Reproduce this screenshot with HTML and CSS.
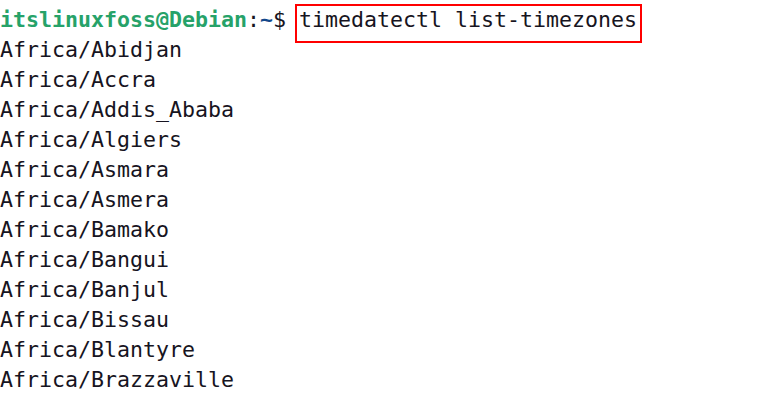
FILE: index.html
```html
<!DOCTYPE html>
<html>
<head>
<meta charset="utf-8">
<link rel="stylesheet" href="styles.css">
</head>
<body>
<div class="term">
  <div class="line"><span class="user">itslinuxfoss@Debian</span>:<span class="path">~</span>$ <span class="cmd">timedatectl list-timezones</span></div>
  <div class="line">Africa/Abidjan</div>
  <div class="line">Africa/Accra</div>
  <div class="line">Africa/Addis_Ababa</div>
  <div class="line">Africa/Algiers</div>
  <div class="line">Africa/Asmara</div>
  <div class="line">Africa/Asmera</div>
  <div class="line">Africa/Bamako</div>
  <div class="line">Africa/Bangui</div>
  <div class="line">Africa/Banjul</div>
  <div class="line">Africa/Bissau</div>
  <div class="line">Africa/Blantyre</div>
  <div class="line">Africa/Brazzaville</div>
  <div class="line">Africa/Bujumbura</div>
</div>
</body>
</html>
```
FILE: styles.css
```css
html, body {
  margin: 0;
  padding: 0;
  background: #ffffff;
  overflow: hidden;
}
.term {
  padding: 5px 0 0 0;
  font-family: "DejaVu Sans Mono", monospace;
  font-size: 21.6px;
  color: #171421;
}
.line {
  height: 30px;
  line-height: 30px;
  white-space: pre;
}
.user {
  color: #26a269;
  font-weight: bold;
}
.path {
  color: #12488b;
  font-weight: bold;
}
.cmd {
  position: relative;
}
.cmd::after {
  content: "";
  position: absolute;
  left: -4px;
  right: -5px;
  top: -3px;
  bottom: -11px;
  border: 2px solid #ff0000;
}
```
